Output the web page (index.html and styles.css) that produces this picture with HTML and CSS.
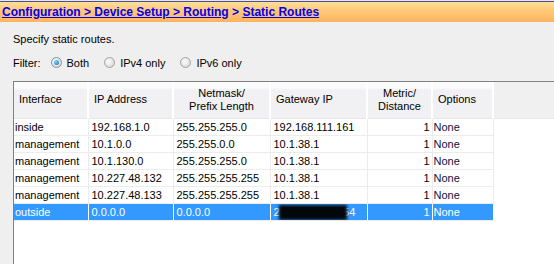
FILE: index.html
```html
<!DOCTYPE html>
<html lang="en">
<head>
    <meta charset="UTF-8">
    <title>Static Routes</title>
    <link rel="stylesheet" href="styles.css">
</head>
<body>
    <div class="titlebar">
        <a class="crumb">Configuration &gt; Device Setup &gt; Routing</a> &gt; <a class="crumb">Static Routes</a>
    </div>
    <div class="panel">
        <p class="intro">Specify static routes.</p>
        <div class="filter">
            <span class="filter-label">Filter:</span>
            <label class="radio"><span class="radio-dot checked"></span>Both</label>
            <label class="radio"><span class="radio-dot"></span>IPv4 only</label>
            <label class="radio"><span class="radio-dot"></span>IPv6 only</label>
        </div>
        <div class="grid-box">
            <table class="routes">
                <colgroup>
                    <col style="width:74px"><col style="width:85px"><col style="width:97px">
                    <col style="width:97px"><col style="width:65px"><col style="width:61px"><col>
                </colgroup>
                <thead>
                    <tr>
                        <th>Interface</th>
                        <th>IP Address</th>
                        <th class="center">Netmask/<br>Prefix Length</th>
                        <th>Gateway IP</th>
                        <th class="center">Metric/<br>Distance</th>
                        <th>Options</th>
                        <th class="filler"></th>
                    </tr>
                </thead>
                <tbody>
                    <tr><td>inside</td><td class="ip">192.168.1.0</td><td class="ip">255.255.255.0</td><td class="ip">192.168.111.161</td><td class="num">1</td><td class="opt">None</td><td class="filler"></td></tr>
                    <tr><td>management</td><td class="ip">10.1.0.0</td><td class="ip">255.255.0.0</td><td class="ip">10.1.38.1</td><td class="num">1</td><td class="opt">None</td><td class="filler"></td></tr>
                    <tr><td>management</td><td class="ip">10.1.130.0</td><td class="ip">255.255.255.0</td><td class="ip">10.1.38.1</td><td class="num">1</td><td class="opt">None</td><td class="filler"></td></tr>
                    <tr><td>management</td><td class="ip">10.227.48.132</td><td class="ip">255.255.255.255</td><td class="ip">10.1.38.1</td><td class="num">1</td><td class="opt">None</td><td class="filler"></td></tr>
                    <tr><td>management</td><td class="ip">10.227.48.133</td><td class="ip">255.255.255.255</td><td class="ip">10.1.38.1</td><td class="num">1</td><td class="opt">None</td><td class="filler"></td></tr>
                    <tr class="selected"><td>outside</td><td class="ip">0.0.0.0</td><td class="ip">0.0.0.0</td><td class="ip redacted">216.117.223.254<span class="blot"></span></td><td class="num">1</td><td class="opt">None</td><td class="filler"></td></tr>
                </tbody>
            </table>
        </div>
    </div>
</body>
</html>
```

FILE: styles.css
```css
html, body {
    margin: 0;
    height: 100%;
    background: #efefef;
    font-family: "Liberation Sans", Arial, sans-serif;
    font-size: 11px;
    color: #000;
    overflow: hidden;
}
.titlebar {
    height: 21px;
    border-top: 1px solid #e6e6ee;
    box-shadow: inset 0 1px 0 #4e4e8e;
    background: linear-gradient(#ffe2a0, #ffc877 45%, #ffb462);
    padding-left: 2px;
    font-size: 12px;
    font-weight: bold;
    line-height: 23px;
    color: #0000ee;
    white-space: nowrap;
}
.crumb {
    color: #0000ee;
    text-decoration: underline;
}
.panel {
    display: flex;
    flex-direction: column;
    height: calc(100% - 22px);
}
.intro {
    margin: 11px 0 0 13px;
    line-height: 13px;
}
.filter {
    display: flex;
    align-items: center;
    margin: 10px 0 0 13px;
    height: 13px;
}
.filter-label {
    margin-right: 10px;
}
.radio {
    display: flex;
    align-items: center;
    margin-right: 15px;
}
.radio-dot {
    width: 11px;
    height: 11px;
    border: 1px solid #a3a3a3;
    border-radius: 50%;
    background: radial-gradient(circle at 40% 40%, #ffffff, #dcdcdc 70%, #c9c9c9);
    margin-right: 5px;
    box-sizing: border-box;
    position: relative;
}
.radio-dot.checked {
    border-color: #7f8fa0;
}
.radio-dot.checked::after {
    content: "";
    position: absolute;
    left: 2px;
    top: 2px;
    width: 5px;
    height: 5px;
    border-radius: 50%;
    background: radial-gradient(circle at 35% 35%, #7fd0ff, #1c6fb5);
}
.grid-box {
    flex: 1;
    margin: 12px 0 0 13px;
    background: #fff;
    border-top: 1px solid #808080;
    border-left: 1px solid #808080;
}
.routes {
    width: 100%;
    border-collapse: collapse;
    table-layout: fixed;
}
.routes th {
    height: 36px;
    padding: 0 0 0 5px;
    text-align: left;
    font-weight: normal;
    line-height: 13px;
    background: linear-gradient(#fbfbfb 0, #fbfbfb 6px, #f1f1f3 8px, #f1f1f3);
    border-right: 2px solid #fff;
    border-bottom: 1px solid #e6e6e6;
    box-sizing: border-box;
}
.routes th.center {
    text-align: center;
    padding: 0;
}
.routes th.filler {
    background: #f0f0f0;
    border-right: 0;
}
.routes td {
    height: 16px;
    padding: 0 0 0 4px;
    line-height: 16px;
    border-right: 1px solid #ececec;
    border-bottom: 1px solid #ececec;
    white-space: nowrap;
    overflow: hidden;
}
.routes td:first-child {
    padding-left: 1px;
}
.routes td.ip {
    padding-left: 3px;
}
.routes td.num {
    text-align: right;
    padding: 0 2px 0 0;
}
.routes td.opt {
    padding-left: 1px;
    color: #101040;
}
.routes td.filler {
    border: 0;
    background: #fff;
}
.routes tr.selected td {
    background: #3399ff;
    color: #fff;
    border-right-color: #fff;
}
.routes tr.selected td.filler {
    background: #fff;
}
.redacted {
    position: relative;
}
.blot {
    position: absolute;
    left: 8px;
    top: 1px;
    width: 68px;
    height: 15px;
    background: #02070b;
    filter: blur(1.5px);
}
```
